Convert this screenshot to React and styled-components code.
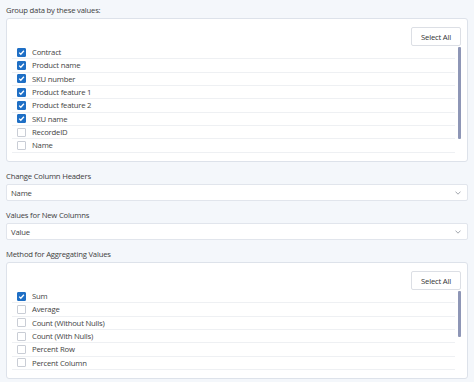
import React from 'react';
import styled, { createGlobalStyle } from 'styled-components';

const GlobalStyle = createGlobalStyle`
  html, body {
    margin: 0;
    padding: 0;
    background: #f4f7fb;
  }
  body {
    font-family: "Open Sans", "Noto Sans", sans-serif;
    letter-spacing: -0.2px;
  }
`;

const Page = styled.div`
  width: 474px;
  height: 382px;
  box-sizing: border-box;
  padding: 3px 6px 0 6px;
  display: flex;
  flex-direction: column;
`;

const Label = styled.div`
  height: 15px;
  line-height: 15px;
  font-size: 7.7px;
  color: #3d3d3d;
  margin-top: ${p => (p.$first ? 0 : 7)}px;
`;

const Box = styled.div`
  height: ${p => p.$height}px;
  box-sizing: border-box;
  background: #fff;
  border: 1px solid #dde2ea;
  border-radius: 3px;
  padding: 8px 6px 0 5px;
  display: flex;
  flex-direction: column;
`;

const Toolbar = styled.div`
  display: flex;
  justify-content: flex-end;
`;

const SelectAll = styled.button`
  width: 50px;
  height: 19px;
  box-sizing: border-box;
  background: #fff;
  border: 1px solid #dcdfe5;
  border-radius: 2px;
  font-family: inherit;
  letter-spacing: inherit;
  font-size: 7.7px;
  color: #333;
  padding: 0;
  cursor: pointer;
`;

const List = styled.div`
  position: relative;
  padding-right: 6px;
`;

const Row = styled.div`
  height: 13.33px;
  box-sizing: border-box;
  border-bottom: 1px solid #eef0f3;
  display: flex;
  align-items: center;
  gap: 6px;
  padding-left: 5px;
  font-size: 7.7px;
  color: #444;
`;

const Check = styled.span`
  width: 9px;
  height: 9px;
  box-sizing: border-box;
  border-radius: 1px;
  flex: none;
  display: flex;
  align-items: center;
  justify-content: center;
  background: ${p => (p.$on ? '#1f6fc5' : '#fff')};
  border: 1px solid ${p => (p.$on ? '#1f6fc5' : '#c9cdd5')};
`;

const Thumb = styled.div`
  position: absolute;
  right: 0;
  top: 1px;
  width: 3.5px;
  height: ${p => p.$height}px;
  background: #8e96b6;
  border-radius: 1px;
`;

const Select = styled.div`
  height: 17px;
  box-sizing: border-box;
  background: #fff;
  border: 1px solid #e1e5ec;
  border-radius: 2px;
  display: flex;
  align-items: center;
  justify-content: space-between;
  padding: 0 6px 0 4px;
  font-size: 7.7px;
  color: #444;
`;

function CheckItem({ on, children }) {
  return (
    <Row>
      <Check $on={on}>
        {on && (
          <svg width="7" height="7" viewBox="0 0 7 7">
            <polyline points="1.2,3.6 2.8,5.2 5.9,1.8" fill="none" stroke="#fff" strokeWidth="1.3" />
          </svg>
        )}
      </Check>
      <span>{children}</span>
    </Row>
  );
}

function Chevron() {
  return (
    <svg width="6" height="4" viewBox="0 0 6 4">
      <polyline points="0.5,0.6 3,3.2 5.5,0.6" fill="none" stroke="#9a9ea6" strokeWidth="0.9" />
    </svg>
  );
}

const groupItems = [
  ['Contract', true],
  ['Product name', true],
  ['SKU number', true],
  ['Product feature 1', true],
  ['Product feature 2', true],
  ['SKU name', true],
  ['RecordeID', false],
  ['Name', false],
];

const methodItems = [
  ['Sum', true],
  ['Average', false],
  ['Count (Without Nulls)', false],
  ['Count (With Nulls)', false],
  ['Percent Row', false],
  ['Percent Column', false],
];

export default function App() {
  return (
    <>
      <GlobalStyle />
      <Page>
        <Label $first>Group data by these values:</Label>
        <Box $height={144}>
          <Toolbar>
            <SelectAll>Select All</SelectAll>
          </Toolbar>
          <List>
            {groupItems.map(([name, on]) => (
              <CheckItem key={name} on={on}>{name}</CheckItem>
            ))}
            <Thumb $height={92} />
          </List>
        </Box>

        <Label>Change Column Headers</Label>
        <Select>
          <span>Name</span>
          <Chevron />
        </Select>

        <Label>Values for New Columns</Label>
        <Select>
          <span>Value</span>
          <Chevron />
        </Select>

        <Label>Method for Aggregating Values</Label>
        <Box $height={117}>
          <Toolbar>
            <SelectAll>Select All</SelectAll>
          </Toolbar>
          <List>
            {methodItems.map(([name, on]) => (
              <CheckItem key={name} on={on}>{name}</CheckItem>
            ))}
            <Thumb $height={46} />
          </List>
        </Box>
      </Page>
    </>
  );
}
